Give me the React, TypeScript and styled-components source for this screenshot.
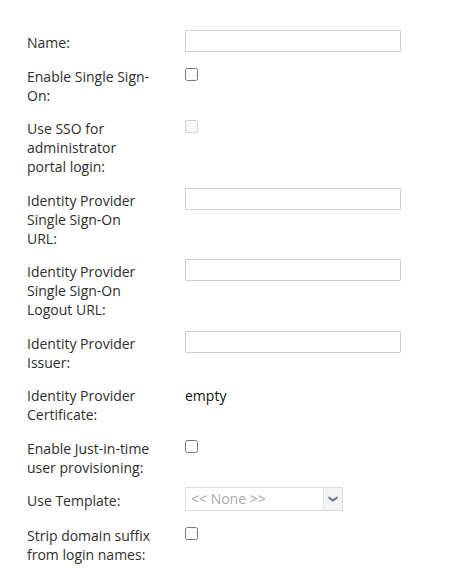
import React from "react";
import styled, { createGlobalStyle } from "styled-components";

const GlobalStyle = createGlobalStyle`
  html, body {
    margin: 0;
    padding: 0;
    background: #ffffff;
  }
  body {
    font-family: "Open Sans", "Noto Sans", "Liberation Sans", sans-serif;
    font-size: 14px;
    color: #333333;
  }
`;

const Page = styled.div`
  padding: 33px 0 0 27px;
`;

const Form = styled.div`
  display: flex;
  flex-direction: column;
  gap: 14.5px;
`;

const Row = styled.div`
  display: grid;
  grid-template-columns: 158px 1fr;
  align-items: start;
`;

const Label = styled.div`
  width: 126px;
  line-height: normal;
  color: #2e2e2e;
`;

const Control = styled.div`
  display: flex;
  align-items: flex-start;
  min-height: 19px;
`;

const TextInput = styled.input`
  box-sizing: border-box;
  width: 216px;
  height: 22px;
  margin: -3px 0 0 0;
  padding: 1px 4px;
  border: 1px solid #cfcfd4;
  border-radius: 1px;
  background: #ffffff;
  font-family: inherit;
  font-size: 13px;
  outline: none;
`;

const Checkbox = styled.input`
  width: 13px;
  height: 13px;
  margin: 1px 0 0 0;
`;

const Value = styled.div`
  line-height: normal;
  color: #111111;
`;

const Select = styled.div`
  box-sizing: border-box;
  display: flex;
  width: 158px;
  height: 24px;
  margin-top: -4px;
  border: 1px solid #dcdce0;
  background: #ffffff;
`;

const SelectText = styled.div`
  flex: 1;
  padding-left: 5px;
  line-height: 22px;
  font-size: 14px;
  color: #a8a8ad;
`;

const SelectButton = styled.div`
  width: 18px;
  display: flex;
  align-items: center;
  justify-content: center;
  background: #f3f3f5;
  border-left: 1px solid #e2e2e6;
`;

const Chevron = () => (
  <svg width="10" height="6" viewBox="0 0 10 6">
    <path d="M0.5 0.3 L5 3.2 L9.5 0.3 L9.5 2.6 L5 5.7 L0.5 2.6 Z" fill="#65748f" />
  </svg>
);

type Field =
  | { label: string; kind: "text" }
  | { label: string; kind: "check"; disabled?: boolean }
  | { label: string; kind: "value"; value: string }
  | { label: string; kind: "select"; placeholder: string };

const fields: Field[] = [
  { label: "Name:", kind: "text" },
  { label: "Enable Single Sign-On:", kind: "check" },
  { label: "Use SSO for administrator portal login:", kind: "check", disabled: true },
  { label: "Identity Provider Single Sign-On URL:", kind: "text" },
  { label: "Identity Provider Single Sign-On Logout URL:", kind: "text" },
  { label: "Identity Provider Issuer:", kind: "text" },
  { label: "Identity Provider Certificate:", kind: "value", value: "empty" },
  { label: "Enable Just-in-time user provisioning:", kind: "check" },
  { label: "Use Template:", kind: "select", placeholder: "<< None >>" },
  { label: "Strip domain suffix from login names:", kind: "check" },
];

function renderControl(f: Field) {
  switch (f.kind) {
    case "text":
      return <TextInput type="text" />;
    case "check":
      return <Checkbox type="checkbox" disabled={f.disabled} />;
    case "value":
      return <Value>{f.value}</Value>;
    case "select":
      return (
        <Select>
          <SelectText>{f.placeholder}</SelectText>
          <SelectButton>
            <Chevron />
          </SelectButton>
        </Select>
      );
  }
}

export default function App() {
  return (
    <>
      <GlobalStyle />
      <Page>
        <Form>
          {fields.map((f) => (
            <Row key={f.label}>
              <Label>{f.label}</Label>
              <Control>{renderControl(f)}</Control>
            </Row>
          ))}
        </Form>
      </Page>
    </>
  );
}
